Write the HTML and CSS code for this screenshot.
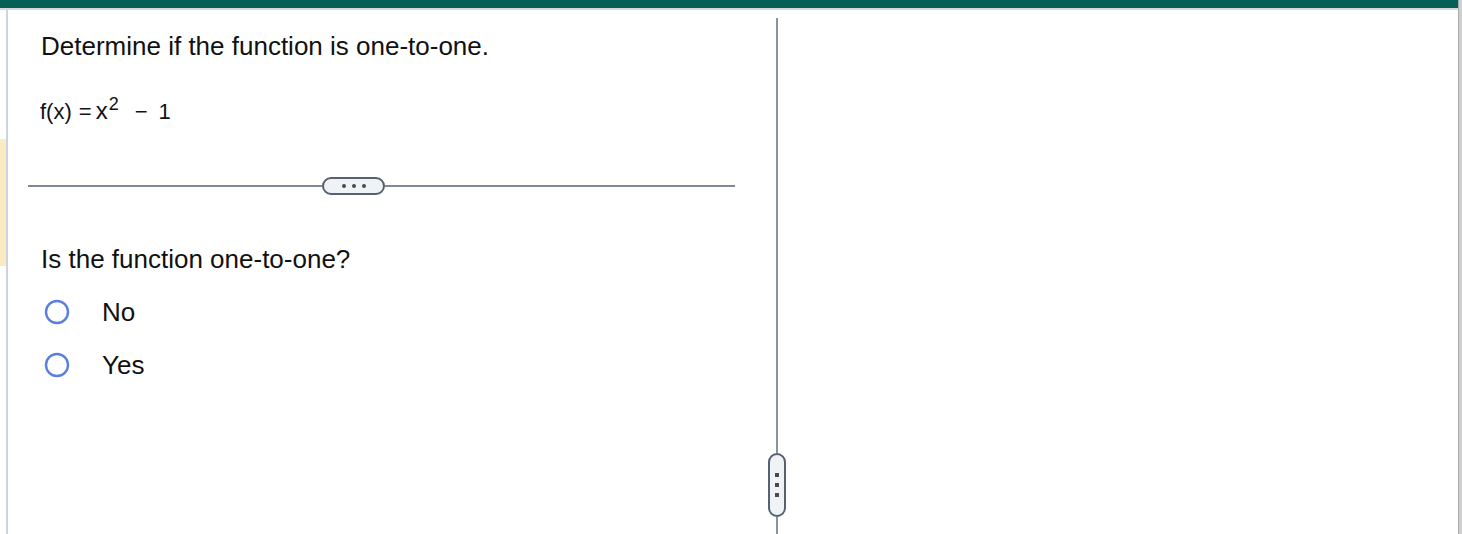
FILE: index.html
```html
<!DOCTYPE html>
<html>
<head>
<meta charset="utf-8">
<link rel="stylesheet" href="styles.css">
</head>
<body>
<div class="topbar"></div>
<div class="main">
  <div class="gutter"><div class="flag"></div></div>
  <div class="left-pane">
    <p class="prompt">Determine if the function is one-to-one.</p>
    <p class="formula">f(x)<span class="eq">=</span><span class="var">x</span><sup>2</sup><span class="minus">−</span>1</p>
    <div class="hdivider">
      <span class="hline"></span>
      <button class="hpill" type="button"><i></i><i></i><i></i></button>
      <span class="hline short"></span>
    </div>
    <p class="question">Is the function one-to-one?</p>
    <label class="option">
      <svg class="radio" width="26" height="26" viewBox="0 0 26 26"><circle cx="13" cy="13" r="11" fill="none" stroke="#5b7fe0" stroke-width="2.4"/></svg>
      <span>No</span>
    </label>
    <label class="option">
      <svg class="radio" width="26" height="26" viewBox="0 0 26 26"><circle cx="13" cy="13" r="11" fill="none" stroke="#5b7fe0" stroke-width="2.4"/></svg>
      <span>Yes</span>
    </label>
  </div>
  <div class="vdivider">
    <span class="vline"></span>
    <button class="vpill" type="button"><i></i><i></i><i></i></button>
    <span class="vline tail"></span>
  </div>
  <div class="right-pane"></div>
  <div class="scrollbar"></div>
</div>
</body>
</html>
```
FILE: styles.css
```css
html, body {
  margin: 0;
  padding: 0;
  background: #ffffff;
  overflow: hidden;
}
body {
  width: 1462px;
  height: 534px;
  font-family: "Liberation Sans", Arial, sans-serif;
  color: #111111;
}
.topbar {
  height: 8px;
  background: #065f57;
  border-bottom: 2px solid #d3dadf;
  margin-right: 4px;
}
.main {
  display: flex;
  height: 524px;
}
.gutter {
  width: 6px;
  flex: none;
  padding-top: 129px;
  box-sizing: border-box;
}
.flag {
  height: 127px;
  background: #faebc3;
}
.left-pane {
  width: 770px;
  flex: none;
  border-left: 2px solid #cbd4df;
  padding: 21px 0 0 33px;
  box-sizing: border-box;
}
.prompt {
  margin: 0;
  font-size: 26px;
  line-height: 30px;
}
.formula {
  margin: 35px 0 0 -1px;
  font-size: 22px;
  line-height: 30px;
}
.formula .eq {
  margin: 0 4px 0 7px;
}
.formula .var {
  font-size: 24px;
}
.formula sup {
  font-size: 18px;
  line-height: 0;
  vertical-align: 9px;
  margin-left: 1px;
}
.formula .minus {
  margin: 0 11px 0 16px;
}
.hdivider {
  display: flex;
  align-items: center;
  height: 18px;
  margin: 50px 0 0 -13px;
  width: 707px;
}
.hline {
  height: 2px;
  background: #7e8995;
  width: 294px;
  flex: none;
}
.hline.short {
  flex: 1;
}
.hpill {
  width: 63px;
  height: 18px;
  flex: none;
  border: 2px solid #56626f;
  border-radius: 9px;
  background: #eff3f6;
  padding: 0;
  display: flex;
  align-items: center;
  justify-content: center;
  gap: 6px;
  box-sizing: border-box;
}
.hpill i {
  width: 4px;
  height: 4px;
  border-radius: 50%;
  background: #444b52;
}
.question {
  margin: 49px 0 0 0;
  font-size: 26px;
  line-height: 30px;
}
.option {
  display: flex;
  align-items: center;
  height: 30px;
  margin-top: 23px;
  font-size: 26px;
  line-height: 30px;
}
.option + .option {
  margin-top: 23px;
}
.radio {
  margin-left: 3px;
  margin-right: 32px;
  flex: none;
}
.vdivider {
  width: 2px;
  flex: none;
  display: flex;
  flex-direction: column;
  align-items: center;
  padding-top: 8px;
  box-sizing: border-box;
}
.vline {
  width: 2px;
  background: #8a93a0;
  height: 435px;
  flex: none;
}
.vline.tail {
  flex: 1;
}
.vpill {
  width: 18px;
  height: 64px;
  flex: none;
  border: 2px solid #56626f;
  border-radius: 9px;
  background: #eff3f6;
  padding: 0;
  display: flex;
  flex-direction: column;
  align-items: center;
  justify-content: center;
  gap: 6px;
  box-sizing: border-box;
}
.vpill i {
  width: 4px;
  height: 4px;
  background: #4a4a4a;
}
.right-pane {
  flex: 1;
}
.scrollbar {
  width: 4px;
  flex: none;
  margin-top: -10px;
  background: #cfcfcf;
  border-left: 1px solid #a9a9a9;
  box-sizing: border-box;
}
```
